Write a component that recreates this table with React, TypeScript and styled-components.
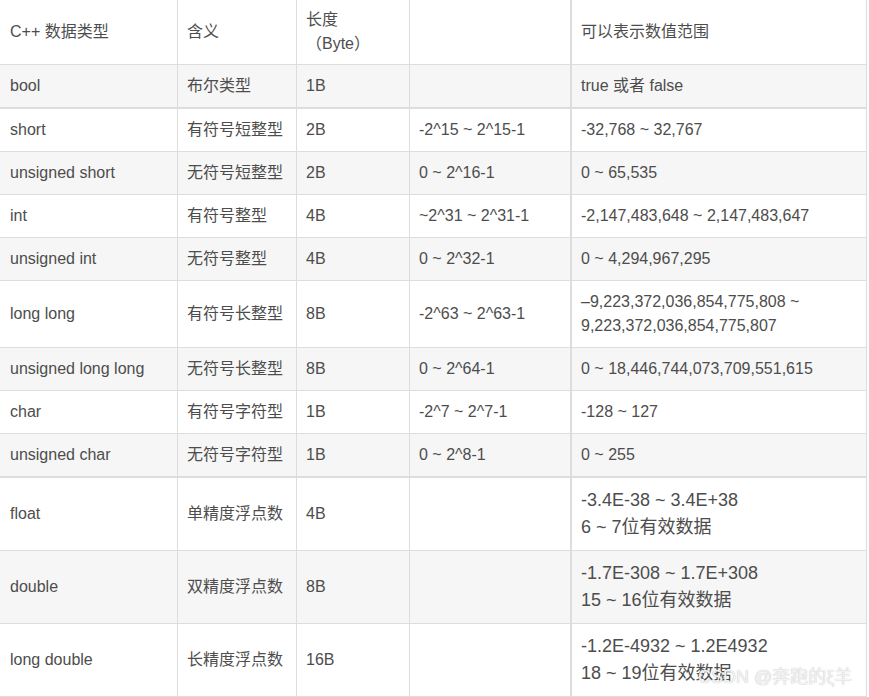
import styled, { createGlobalStyle } from "styled-components";

type Row = {
  type: string;
  meaning: string;
  size: string;
  expr?: string;
  range: string[];
  big?: boolean;
  thick?: boolean;
};

const rows: Row[] = [
  { type: "bool", meaning: "布尔类型", size: "1B", range: ["true 或者 false"], thick: true },
  { type: "short", meaning: "有符号短整型", size: "2B", expr: "-2^15 ~ 2^15-1", range: ["-32,768 ~ 32,767"] },
  { type: "unsigned short", meaning: "无符号短整型", size: "2B", expr: "0 ~ 2^16-1", range: ["0 ~ 65,535"] },
  { type: "int", meaning: "有符号整型", size: "4B", expr: "~2^31 ~ 2^31-1", range: ["-2,147,483,648 ~ 2,147,483,647"] },
  { type: "unsigned int", meaning: "无符号整型", size: "4B", expr: "0 ~ 2^32-1", range: ["0 ~ 4,294,967,295"] },
  {
    type: "long long",
    meaning: "有符号长整型",
    size: "8B",
    expr: "-2^63 ~ 2^63-1",
    range: ["–9,223,372,036,854,775,808 ~", "9,223,372,036,854,775,807"],
  },
  { type: "unsigned long long", meaning: "无符号长整型", size: "8B", expr: "0 ~ 2^64-1", range: ["0 ~ 18,446,744,073,709,551,615"] },
  { type: "char", meaning: "有符号字符型", size: "1B", expr: "-2^7 ~ 2^7-1", range: ["-128 ~ 127"] },
  { type: "unsigned char", meaning: "无符号字符型", size: "1B", expr: "0 ~ 2^8-1", range: ["0 ~ 255"], thick: true },
  { type: "float", meaning: "单精度浮点数", size: "4B", range: ["-3.4E-38 ~ 3.4E+38", "6 ~ 7位有效数据"], big: true },
  { type: "double", meaning: "双精度浮点数", size: "8B", range: ["-1.7E-308 ~ 1.7E+308", "15 ~ 16位有效数据"], big: true },
  { type: "long double", meaning: "长精度浮点数", size: "16B", range: ["-1.2E-4932 ~ 1.2E4932", "18 ~ 19位有效数据"], big: true },
];

export default function App() {
  return (
    <>
      <GlobalStyle />
      <Page>
        <Table>
          <TableRow $gray={false} $thick={false}>
            <Cell $head>C++ 数据类型</Cell>
            <Cell $head>含义</Cell>
            <Cell $head>
              <span>长度</span>
              <span>（Byte）</span>
            </Cell>
            <Cell $head $divider />
            <Cell $head>可以表示数值范围</Cell>
          </TableRow>
          {rows.map((r, i) => (
            <TableRow key={"row" + i} $gray={i % 2 === 0} $thick={!!r.thick}>
              <Cell>{r.type}</Cell>
              <Cell>{r.meaning}</Cell>
              <Cell>{r.size}</Cell>
              <Cell $divider>{r.expr}</Cell>
              <Cell $big={r.big}>
                {r.range.map((line, j) => (
                  <span key={j}>{line}</span>
                ))}
              </Cell>
            </TableRow>
          ))}
        </Table>
        {/* watermark sits over the last row, as in the screenshot */}
        <Watermark>CSDN @奔跑的ξ羊</Watermark>
      </Page>
    </>
  );
}

const GlobalStyle = createGlobalStyle`
  html, body {
    margin: 0;
    padding: 0;
    background: #fff;
  }
  body {
    font-family: "Liberation Sans", Arial, "Noto Sans CJK SC", sans-serif;
    color: #4d4d4d;
  }
`;

const Page = styled.div`
  position: relative;
  width: 869px;
  height: 697px;
  overflow: hidden;
`;

const Table = styled.div`
  display: flex;
  flex-direction: column;
  width: 867px;
`;

const TableRow = styled.div<{ $gray: boolean; $thick: boolean }>`
  display: grid;
  grid-template-columns: 178px 119px 113px 162px 295px;
  background: ${(p) => (p.$gray ? "#f6f6f6" : "#fff")};
  border-bottom: ${(p) => (p.$thick ? "2px" : "1px")} solid #dddddd;
`;

const Cell = styled.div<{ $head?: boolean; $divider?: boolean; $big?: boolean }>`
  display: flex;
  flex-direction: column;
  justify-content: center;
  box-sizing: border-box;
  padding: ${(p) => (p.$head ? "8px 9px" : "9px 9px")};
  border-right: ${(p) => (p.$divider ? "2px" : "1px")} solid #dddddd;
  font-size: ${(p) => (p.$big ? "18px" : "16px")};
  line-height: ${(p) => (p.$big ? "27px" : "24px")};
  white-space: nowrap;

  &:first-child {
    padding-left: 10px;
  }
`;

const Watermark = styled.div`
  position: absolute;
  left: 698px;
  top: 664px;
  font-size: 18px;
  line-height: 26px;
  color: rgba(255, 255, 255, 0.85);
  text-shadow: 0 0 1px #a8a8a8;
  white-space: nowrap;
  pointer-events: none;
`;
